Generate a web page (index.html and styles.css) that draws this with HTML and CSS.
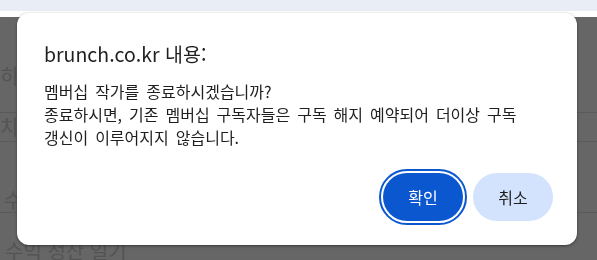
FILE: index.html
```html
<!DOCTYPE html>
<html lang="ko">
<head>
<meta charset="utf-8">
<link rel="stylesheet" href="styles.css">
</head>
<body>
<div class="topbar"></div>
<main class="page">
  <div class="gap-top"></div>
  <div class="ghost g1">다</div>
  <div class="ghost g2">히</div>
  <div class="row-line">
    <span class="ghost g3">치</span>
  </div>
  <div class="ghost g4">수</div>
  <div class="ghost g5">수익 정산 일기</div>
</main>
<div class="overlay"></div>
<div class="dialog" role="alertdialog">
  <div class="title">brunch.co.kr 내용:</div>
  <div class="message">멤버십 작가를 종료하시겠습니까?<br>종료하시면, 기존 멤버십 구독자들은 구독 해지 예약되어 더이상 구독<br>갱신이 이루어지지 않습니다.</div>
  <div class="actions">
    <button class="btn primary">확인</button>
    <button class="btn secondary">취소</button>
  </div>
</div>
</body>
</html>
```

FILE: styles.css
```css
html, body {
  margin: 0;
  padding: 0;
  width: 597px;
  height: 260px;
  overflow: hidden;
  background: #ffffff;
  font-family: "Noto Sans CJK KR", "Noto Sans", sans-serif;
}

.topbar {
  height: 11px;
  background: #e9eef6;
}

.page {
  display: flex;
  flex-direction: column;
}

.gap-top {
  height: 8px;
}

.ghost {
  color: #d2d2d2;
  font-size: 20px;
  line-height: 24px;
}

.g1 {
  padding-left: 30px;
  height: 45px;
}

.g2 {
  height: 48px;
}

.row-line {
  border-top: 1px solid #e0e0e0;
  border-bottom: 1px solid #e0e0e0;
  height: 28px;
  display: flex;
  align-items: center;
}

.g3 {
  line-height: 28px;
}

.g4 {
  margin-top: 46px;
  padding-left: 4px;
  height: 24px;
  border-bottom: 1px solid #e0e0e0;
}

.g5 {
  margin-top: 26px;
  padding-left: 5px;
}

.overlay {
  position: fixed;
  left: 0;
  right: 0;
  top: 17px;
  bottom: 0;
  background: rgba(0, 0, 0, 0.6);
}

.dialog {
  position: fixed;
  left: 17px;
  top: 13px;
  width: 560px;
  height: 232px;
  box-sizing: border-box;
  background: #ffffff;
  border-radius: 12px;
  box-shadow: 0 1px 2px rgba(0, 0, 0, 0.3), 0 1px 3px 1px rgba(0, 0, 0, 0.15);
  padding: 29px 24px 24px 27px;
  display: flex;
  flex-direction: column;
  color: #1f1f1f;
}

.title {
  font-size: 19.5px;
  line-height: 24px;
}

.message {
  margin-top: 14px;
  font-size: 16px;
  line-height: 23px;
  word-spacing: 2.5px;
}

.actions {
  margin-top: auto;
  display: flex;
  justify-content: flex-end;
  gap: 10px;
}

.btn {
  width: 80px;
  height: 48px;
  border: none;
  border-radius: 24px;
  font-family: inherit;
  font-size: 16px;
  padding: 0;
}

.primary {
  background: #0b57d0;
  color: #ffffff;
  outline: 2px solid #0b57d0;
  outline-offset: 2px;
}

.secondary {
  background: #d3e3fd;
  color: #1f1f1f;
}
```
